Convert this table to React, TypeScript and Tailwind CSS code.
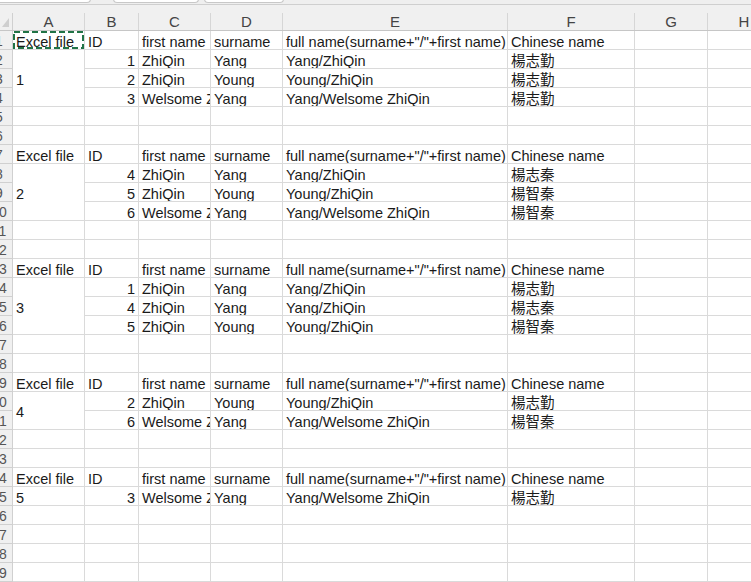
import React from "react";

type Cell = { t: string; r?: boolean } | null;

const HDR: Cell[] = [
  { t: "Excel file" },
  { t: "ID" },
  { t: "first name" },
  { t: "surname" },
  { t: 'full name(surname+"/"+first name)' },
  { t: "Chinese name" },
  null,
  null,
];

function d(id: string, first: string, sur: string, zh: string): Cell[] {
  return [
    null,
    { t: id, r: true },
    { t: first },
    { t: sur },
    { t: `${sur}/${first}` },
    { t: zh },
    null,
    null,
  ];
}

const EMPTY: Cell[] = [null, null, null, null, null, null, null, null];

const rows: Cell[][] = [
  HDR,
  d("1", "ZhiQin", "Yang", "楊志勤"),
  d("2", "ZhiQin", "Young", "楊志勤"),
  d("3", "Welsome ZhiQin", "Yang", "楊志勤"),
  EMPTY,
  EMPTY,
  HDR,
  d("4", "ZhiQin", "Yang", "楊志秦"),
  d("5", "ZhiQin", "Young", "楊智秦"),
  d("6", "Welsome ZhiQin", "Yang", "楊智秦"),
  EMPTY,
  EMPTY,
  HDR,
  d("1", "ZhiQin", "Yang", "楊志勤"),
  d("4", "ZhiQin", "Yang", "楊志秦"),
  d("5", "ZhiQin", "Young", "楊智秦"),
  EMPTY,
  EMPTY,
  HDR,
  d("2", "ZhiQin", "Young", "楊志勤"),
  d("6", "Welsome ZhiQin", "Yang", "楊智秦"),
  EMPTY,
  EMPTY,
  HDR,
  d("3", "Welsome ZhiQin", "Yang", "楊志勤"),
  EMPTY,
  EMPTY,
  EMPTY,
  EMPTY,
];

// merges in column A: start row (1-based) -> [span, label]
const merges: Record<number, [number, string]> = {
  2: [3, "1"],
  8: [3, "2"],
  14: [3, "3"],
  20: [2, "4"],
  25: [1, "5"],
};
const covered = new Set<number>();
Object.entries(merges).forEach(([s, [n]]) => {
  for (let i = 1; i < n; i++) covered.add(Number(s) + i);
});

const LETTERS = ["A", "B", "C", "D", "E", "F", "G", "H"];

const cellBase =
  "border-r border-b border-[#dadada] overflow-hidden whitespace-nowrap flex items-center pt-[3px] text-[14.5px] leading-[16px] text-[#1a1a1a]";

export default function App() {
  const cells: React.ReactNode[] = [];
  rows.forEach((row, i) => {
    const r = i + 1;
    cells.push(
      <div
        key={`rh${r}`}
        className="border-r border-b border-[#d0d0d0] bg-[#f0f0f0] overflow-hidden flex items-center"
      >
        <div className="ml-[-14px] w-[26px] shrink-0 text-center text-[14px] leading-[16px] pt-[2px] text-[#555]">
          {r}
        </div>
      </div>
    );
    row.forEach((c, ci) => {
      if (ci === 0) {
        if (covered.has(r)) return;
        const m = merges[r];
        if (m) {
          const span = m[0] === 3 ? "row-span-3" : m[0] === 2 ? "row-span-2" : "row-span-1";
          cells.push(
            <div key={`c${r}-${ci}`} className={`${cellBase} ${span} pl-[3px]`}>
              {m[1]}
            </div>
          );
          return;
        }
        if (c && c.t === "Excel file" && r === 1) {
          cells.push(
            <div key={`c${r}-${ci}`} className={`${cellBase} pl-[3px] relative`}>
              {c.t}
              <svg
                className="absolute left-[0px] top-[0px]"
                width="72"
                height="19"
                viewBox="0 0 72 19"
              >
                <rect
                  x="1"
                  y="1"
                  width="69"
                  height="16"
                  fill="none"
                  stroke="#217346"
                  strokeWidth="2"
                  strokeDasharray="6 3"
                />
              </svg>
            </div>
          );
          return;
        }
      }
      cells.push(
        <div
          key={`c${r}-${ci}`}
          className={`${cellBase} ${c && c.r ? "justify-end pr-[3px]" : "pl-[3px]"}`}
        >
          {c ? c.t : ""}
        </div>
      );
    });
  });

  return (
    <div className="w-[751px] h-[582px] overflow-hidden bg-white font-['Liberation_Sans','Noto_Sans_CJK_TC',sans-serif]">
      {/* top strip with tab edges */}
      <div className="h-[5px] bg-[#efefef] border-b border-[#cfcfcf] flex items-start overflow-hidden">
        <div className="w-[91px] h-[4px] bg-white border-r border-b border-[#c8c8c8] rounded-br-[4px] mt-[-1px]" />
        <div className="w-[86px] h-[4px] bg-white border border-t-0 border-[#c8c8c8] rounded-b-[4px] ml-[22px] mt-[-1px]" />
        <div className="w-[80px] h-[4px] bg-white border border-t-0 border-[#c8c8c8] rounded-b-[4px] ml-[5px] mt-[-1px]" />
      </div>
      {/* column header band */}
      <div className="bg-[#f0f0f0]">
        <div className="h-[8px]" />
        <div className="grid grid-cols-[13px_72px_54px_72px_72px_225px_127px_73px_73px] h-[18px] border-b border-[#c6c6c6]">
          <div className="border-r border-[#d0d0d0] relative overflow-hidden">
            <svg className="absolute left-[2px] top-[5px]" width="8" height="9" viewBox="0 0 8 9">
              <polygon points="7,0 7,9 0,9" fill="#cfcfcf" />
            </svg>
          </div>
          {LETTERS.map((l) => (
            <div
              key={l}
              className="border-r border-[#d6d6d6] flex items-center justify-center text-[15px] leading-[16px] text-[#444] pt-[1px]"
            >
              {l}
            </div>
          ))}
        </div>
      </div>
      <div className="grid grid-cols-[13px_72px_54px_72px_72px_225px_127px_73px_73px] auto-rows-[19px]">
        {cells}
      </div>
    </div>
  );
}
